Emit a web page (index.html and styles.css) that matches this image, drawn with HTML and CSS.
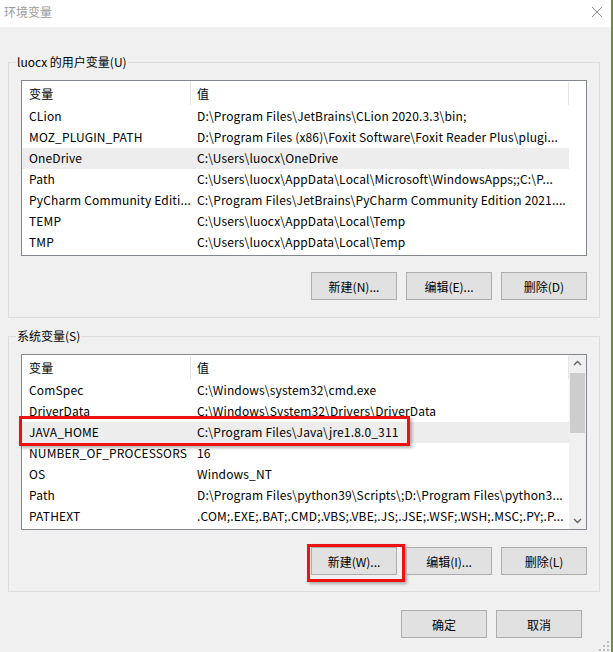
FILE: index.html
```html
<!DOCTYPE html>
<html lang="zh-CN">
<head>
    <meta charset="UTF-8">
    <title>环境变量</title>
    <link rel="stylesheet" href="styles.css">
</head>
<body>
    <div class="window">
        <div class="titlebar">
            <span class="title">环境变量</span>
            <svg class="close" width="12" height="12" viewBox="0 0 12 12">
                <path d="M1 1L11 11M11 1L1 11" stroke="#8c8c8c" stroke-width="1" fill="none"/>
            </svg>
        </div>

        <fieldset class="group user">
            <legend>luocx 的用户变量(U)</legend>
            <div class="list">
                <div class="cols">
                    <div class="row head"><span class="name">变量</span><span class="value">值</span></div>
                    <div class="row"><span class="name">CLion</span><span class="value">D:\Program Files\JetBrains\CLion 2020.3.3\bin;</span></div>
                    <div class="row"><span class="name">MOZ_PLUGIN_PATH</span><span class="value">D:\Program Files (x86)\Foxit Software\Foxit Reader Plus\plugi...</span></div>
                    <div class="row hot"><span class="name">OneDrive</span><span class="value">C:\Users\luocx\OneDrive</span></div>
                    <div class="row"><span class="name">Path</span><span class="value">C:\Users\luocx\AppData\Local\Microsoft\WindowsApps;;C:\P...</span></div>
                    <div class="row"><span class="name">PyCharm Community Editi...</span><span class="value">C:\Program Files\JetBrains\PyCharm Community Edition 2021....</span></div>
                    <div class="row"><span class="name">TEMP</span><span class="value">C:\Users\luocx\AppData\Local\Temp</span></div>
                    <div class="row"><span class="name">TMP</span><span class="value">C:\Users\luocx\AppData\Local\Temp</span></div>
                </div>
            </div>
            <div class="buttons">
                <button class="btn">新建(N)...</button>
                <button class="btn">编辑(E)...</button>
                <button class="btn">删除(D)</button>
            </div>
        </fieldset>

        <fieldset class="group system">
            <legend>系统变量(S)</legend>
            <div class="list">
                <div class="cols">
                    <div class="row head"><span class="name">变量</span><span class="value">值</span></div>
                    <div class="row"><span class="name">ComSpec</span><span class="value">C:\Windows\system32\cmd.exe</span></div>
                    <div class="row"><span class="name">DriverData</span><span class="value">C:\Windows\System32\Drivers\DriverData</span></div>
                    <div class="row hot"><span class="name">JAVA_HOME</span><span class="value">C:\Program Files\Java\jre1.8.0_311</span></div>
                    <div class="row"><span class="name">NUMBER_OF_PROCESSORS</span><span class="value">16</span></div>
                    <div class="row"><span class="name">OS</span><span class="value">Windows_NT</span></div>
                    <div class="row"><span class="name">Path</span><span class="value">D:\Program Files\python39\Scripts\;D:\Program Files\python3...</span></div>
                    <div class="row"><span class="name">PATHEXT</span><span class="value">.COM;.EXE;.BAT;.CMD;.VBS;.VBE;.JS;.JSE;.WSF;.WSH;.MSC;.PY;.P...</span></div>
                </div>
                <div class="scroll">
                    <svg class="arrow" width="17" height="17" viewBox="0 0 17 17">
                        <path d="M5 10L8.5 6.5L12 10" stroke="#606060" stroke-width="1.3" fill="none"/>
                    </svg>
                    <div class="track"><div class="thumb"></div></div>
                    <svg class="arrow" width="17" height="17" viewBox="0 0 17 17">
                        <path d="M5 7L8.5 10.5L12 7" stroke="#606060" stroke-width="1.3" fill="none"/>
                    </svg>
                </div>
                <span class="mark mark-row"></span>
            </div>
            <div class="buttons">
                <button class="btn">新建(W)...<span class="mark mark-btn"></span></button>
                <button class="btn">编辑(I)...</button>
                <button class="btn">删除(L)</button>
            </div>
        </fieldset>

        <div class="buttons footer">
            <button class="btn">确定</button>
            <button class="btn">取消</button>
        </div>

        <svg class="grip" width="12" height="12" viewBox="0 0 12 12">
            <rect x="9" y="1" width="2" height="2" fill="#bdbdbd"/>
            <rect x="5" y="5" width="2" height="2" fill="#bdbdbd"/>
            <rect x="9" y="5" width="2" height="2" fill="#bdbdbd"/>
            <rect x="1" y="9" width="2" height="2" fill="#bdbdbd"/>
            <rect x="5" y="9" width="2" height="2" fill="#bdbdbd"/>
            <rect x="9" y="9" width="2" height="2" fill="#bdbdbd"/>
        </svg>
    </div>
</body>
</html>
```

FILE: styles.css
```css
* {
    box-sizing: border-box;
}
body {
    margin: 0;
    background: #6f8d31;
    font-family: "Noto Sans CJK SC", "Noto Sans", sans-serif;
    font-size: 12px;
    color: #000;
}
.window {
    position: relative;
    width: 611px;
    height: 652px;
    background: #f0f0f0;
    overflow: hidden;
}
.titlebar {
    display: flex;
    justify-content: space-between;
    align-items: center;
    height: 27px;
    background: #fff;
    padding: 0 8px 3px 4px;
}
.title {
    color: #9a9a9a;
    line-height: 16px;
}
.group {
    width: 592px;
    margin: 0 0 0 8px;
    padding: 10px 12px 0 12px;
    border: 1px solid #dcdcdc;
    min-width: 0;
}
.user {
    margin-top: 27px;
    padding-bottom: 17px;
}
.system {
    margin-top: 10px;
    padding-bottom: 16px;
}
.group legend {
    margin-left: -5px;
    padding: 0 1px;
    line-height: 16px;
}
.list {
    position: relative;
    display: flex;
    height: 176px;
    background: #fff;
    border: 1px solid #828790;
}
.cols {
    width: 547px;
}
.row {
    display: flex;
    height: 21px;
    line-height: 20px;
    white-space: nowrap;
    letter-spacing: 0.15px;
}
.row.head {
    height: 25px;
    line-height: 23px;
}
.row.hot {
    background: #ededed;
}
.name {
    width: 169px;
    flex: none;
    padding-left: 7px;
    overflow: hidden;
}
.value {
    flex: 1;
    padding-left: 6px;
    overflow: hidden;
}
.head .name,
.head .value {
    border-right: 1px solid #e5e5e5;
    margin-top: 1px;
    height: 23px;
}
.scroll {
    display: flex;
    flex-direction: column;
    width: 17px;
    background: #f0f0f0;
}
.arrow {
    display: block;
    flex: none;
}
.track {
    flex: 1;
    padding-top: 1px;
}
.thumb {
    height: 60px;
    margin: 0 1px;
    background: #cdcdcd;
}
.buttons {
    display: flex;
    justify-content: flex-end;
    gap: 9px;
    margin-top: 16px;
}
.system .buttons {
    margin-top: 17px;
}
.btn {
    position: relative;
    width: 86px;
    height: 28px;
    padding: 0;
    background: #e1e1e1;
    border: 1px solid #adadad;
    font-family: inherit;
    font-size: 12px;
    color: #000;
}
.footer {
    margin-top: 18px;
    padding-right: 29px;
}
.mark {
    position: absolute;
    border: 3px solid #ee1111;
    box-shadow: 2px 2px 3px rgba(0, 0, 0, 0.3);
    pointer-events: none;
}
.mark-row {
    left: -3px;
    top: 61px;
    width: 391px;
    height: 30px;
}
.mark-btn {
    left: -5px;
    top: -4px;
    width: 98px;
    height: 38px;
}
.grip {
    position: absolute;
    right: 1px;
    bottom: 0;
}
```
